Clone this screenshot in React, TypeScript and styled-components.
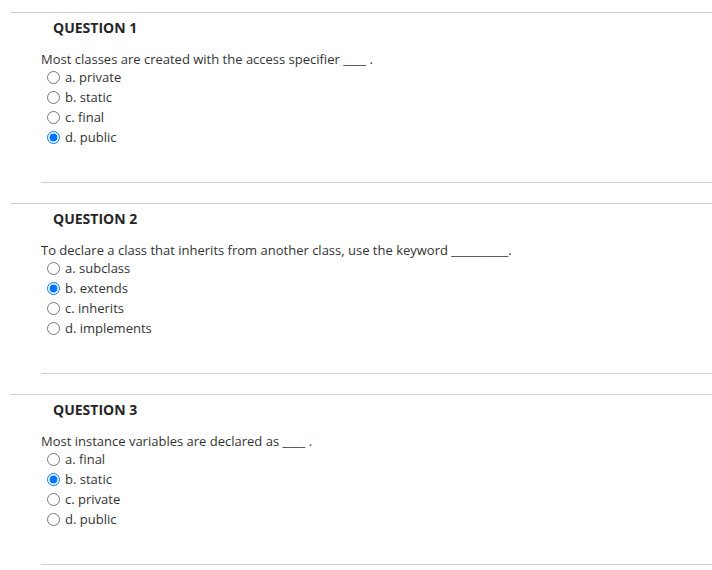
import React from "react";
import styled, { createGlobalStyle } from "styled-components";

const Global = createGlobalStyle`
  html, body { margin: 0; padding: 0; background: #fff; }
  body { font-family: "Open Sans", "Noto Sans", sans-serif; color: #333; }
`;

const Page = styled.div`
  display: flex;
  flex-direction: column;
  padding-top: 12px;
`;

const Section = styled.section`
  margin-left: 11px;
  border-top: 1px solid #cfcfcf;
  display: flex;
  flex-direction: column;
  padding-bottom: 20px;
`;

const Title = styled.h2`
  margin: 5px 0 0 42px;
  font-size: 14px;
  line-height: 20px;
  font-weight: 700;
  color: #262626;
`;

const Body = styled.div`
  margin: 13px 0 0 30px;
  display: flex;
  flex-direction: column;
`;

const Prompt = styled.p`
  margin: 0;
  font-size: 13px;
  line-height: 16px;
  color: #333;
`;

const Options = styled.div`
  display: flex;
  flex-direction: column;
`;

const Option = styled.label`
  display: flex;
  align-items: center;
  height: 20px;
  font-size: 13px;
  color: #333;
`;

const Radio = styled.input.attrs({ type: "radio" })`
  width: 13px;
  height: 13px;
  margin: 0 5px 0 6px;
  accent-color: #0075ff;
`;

const Divider = styled.hr`
  margin: 35px 0 0 0;
  border: 0;
  border-top: 1px solid #cfcfcf;
  height: 0;
`;

type Q = { title: string; prompt: string; options: string[]; checked: number };

const questions: Q[] = [
  {
    title: "QUESTION 1",
    prompt: "Most classes are created with the access specifier ____ .",
    options: ["a. private", "b. static", "c. final", "d. public"],
    checked: 3,
  },
  {
    title: "QUESTION 2",
    prompt: "To declare a class that inherits from another class, use the keyword __________.",
    options: ["a. subclass", "b. extends", "c. inherits", "d. implements"],
    checked: 1,
  },
  {
    title: "QUESTION 3",
    prompt: "Most instance variables are declared as ____ .",
    options: ["a. final", "b. static", "c. private", "d. public"],
    checked: 1,
  },
];

export default function App() {
  return (
    <>
      <Global />
      <Page>
        {questions.map((q, qi) => (
          <Section key={qi}>
            <Title>{q.title}</Title>
            <Body>
              <Prompt>{q.prompt}</Prompt>
              <Options>
                {q.options.map((o, oi) => (
                  <Option key={oi}>
                    <Radio name={`q${qi}`} defaultChecked={oi === q.checked} />
                    {o}
                  </Option>
                ))}
              </Options>
              <Divider />
            </Body>
          </Section>
        ))}
      </Page>
    </>
  );
}
